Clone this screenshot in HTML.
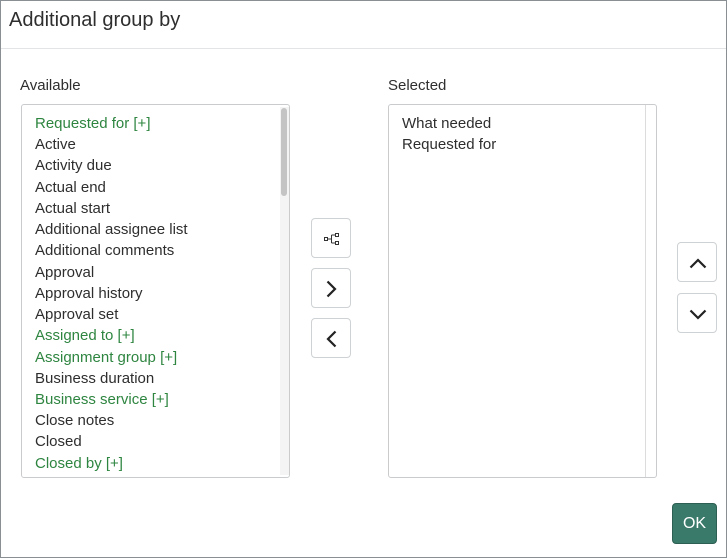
<!DOCTYPE html>
<html><head><style>
*{box-sizing:border-box;margin:0;padding:0}
body{width:727px;height:558px;background:#fff;font-family:"Liberation Sans",sans-serif;position:relative;overflow:hidden}
.frame{position:absolute;left:0;top:0;width:727px;height:558px;border:1px solid #8a8f94}
.title{position:absolute;left:9px;top:9px;font-size:20px;color:#2e2e2e}
.sep{position:absolute;left:1px;right:1px;top:48px;height:1px;background:#e2e4e6}
.lbl{position:absolute;top:77px;font-size:15px;color:#2e2e2e}
.box{position:absolute;top:104px;height:374px;border:1px solid #c9cbcd;border-radius:3px;background:#fff}
.item{position:absolute;left:13px;font-size:15px;color:#2e2e2e;line-height:20px;white-space:nowrap}
.g{color:#2e8540}
.btn{position:absolute;width:40px;height:40px;border:1px solid #cfd2d4;border-radius:4px;background:#fff}
.btn svg{position:absolute;left:0;top:0}
.ok{position:absolute;left:672px;top:503px;width:45px;height:41px;background:#3a7a6a;border:1px solid #2d5f52;border-radius:4px;color:#fff;font-size:16px;text-align:center;line-height:39px}
</style></head><body>
<div class="frame"></div>
<div class="title">Additional group by</div>
<div class="sep"></div>
<div class="lbl" style="left:20px">Available</div>
<div class="lbl" style="left:388px">Selected</div>
<div class="box" style="left:21px;width:269px">
<div style="position:absolute;left:258px;top:2px;width:9px;height:368px;background:#f4f4f4"></div>
<div style="position:absolute;left:259px;top:3px;width:6px;height:88px;background:#c4c4c4;border-radius:3px"></div>
</div>
<div class="box" style="left:388px;width:269px">
<div style="position:absolute;left:256px;top:0;width:1px;height:372px;background:#dcdcdc"></div>
<div class="item" style="top:9px">What needed</div>
<div class="item" style="top:30px">Requested for</div>
</div>
<div style="position:absolute;left:22px;top:114px">
<div class="item g" style="top:0">Requested for [+]</div>
<div class="item" style="top:21px">Active</div>
<div class="item" style="top:42px">Activity due</div>
<div class="item" style="top:64px">Actual end</div>
<div class="item" style="top:85px">Actual start</div>
<div class="item" style="top:106px">Additional assignee list</div>
<div class="item" style="top:127px">Additional comments</div>
<div class="item" style="top:149px">Approval</div>
<div class="item" style="top:170px">Approval history</div>
<div class="item" style="top:191px">Approval set</div>
<div class="item g" style="top:212px">Assigned to [+]</div>
<div class="item g" style="top:234px">Assignment group [+]</div>
<div class="item" style="top:255px">Business duration</div>
<div class="item g" style="top:276px">Business service [+]</div>
<div class="item" style="top:297px">Close notes</div>
<div class="item" style="top:318px">Closed</div>
<div class="item g" style="top:340px">Closed by [+]</div>
</div>
<div class="btn" style="left:311px;top:218px"><svg width="40" height="40"><g fill="none" stroke="#333" stroke-width="1"><rect x="12.5" y="18.5" width="3" height="3"/><rect x="23.5" y="14.5" width="3" height="3"/><rect x="23.5" y="22.5" width="3" height="3"/><path d="M15.5 20H19.5M19.5 16V24M19.5 16H23.5M19.5 24H23.5"/></g></svg></div>
<div class="btn" style="left:311px;top:268px"><svg width="40" height="40"><path d="M15.5 12.5L23 20L15.5 27.5" fill="none" stroke="#222" stroke-width="2.2"/></svg></div>
<div class="btn" style="left:311px;top:318px"><svg width="40" height="40"><path d="M23.5 12.5L16 20L23.5 27.5" fill="none" stroke="#222" stroke-width="2.2"/></svg></div>
<div class="btn" style="left:677px;top:242px"><svg width="40" height="40"><path d="M12.5 24.5L20 17L27.5 24.5" fill="none" stroke="#222" stroke-width="2.2"/></svg></div>
<div class="btn" style="left:677px;top:293px"><svg width="40" height="40"><path d="M12.5 16.5L20 24L27.5 16.5" fill="none" stroke="#222" stroke-width="2.2"/></svg></div>
<div class="ok">OK</div>
</body></html>
